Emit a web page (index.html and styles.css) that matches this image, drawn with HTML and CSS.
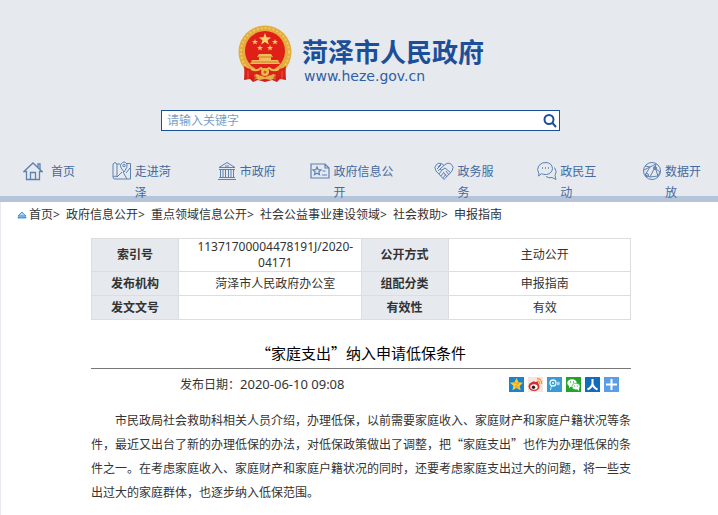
FILE: index.html
```html
<!DOCTYPE html>
<html lang="zh-CN">
<head>
<meta charset="utf-8">
<meta name="viewport" content="width=device-width, initial-scale=1">
<title>“家庭支出”纳入申请低保条件</title>
<link rel="stylesheet" href="styles.css">
</head>
<body>
<header class="header">
  <div class="brand">
    <svg class="emblem" viewBox="0 0 54 58" aria-hidden="true">
      <path d="M7 40 L6 55 L12 54 L15 57 L20 55 L27 57 L34 55 L39 57 L42 54 L48 55 L47 40Z" fill="#cf1e1c"/>
      <circle cx="27" cy="27" r="26.500" fill="#e3ac3d"/>
      <circle cx="27" cy="27" r="24" fill="none" stroke="#f0c660" stroke-width="2" stroke-dasharray="2 2"/>
      <circle cx="27" cy="26" r="20" fill="#e01f19"/>
      <path d="M27 8l1.600 4.200 4.400.2-3.400 2.800 1.200 4.300-3.800-2.400-3.800 2.400 1.200-4.300-3.400-2.800 4.400-.2z" fill="#f9d26b"/>
      <g fill="#f4c65b">
        <path id="s" d="M17 14l.8 2 2.200.1-1.700 1.300.6 2.100-1.900-1.200-1.900 1.200.6-2.100-1.700-1.300 2.200-.1z"/>
        <use href="#s" x="20"/><use href="#s" x="5" y="6"/><use href="#s" x="15" y="6"/>
      </g>
      <path d="M21 29h12l2 3h-2v3h7l2 4H12l2-4h7v-3h-2z" fill="#f2bd58"/>
      <path d="M20 32h14M13 37h28" stroke="#cf7c28" stroke-width="1"/>
      <path d="M6 41q9 6 14 1 3-2 7 0 4-2 7 0 5 5 14-1l-1 11q-8 1-11-3l-9 3-9-3q-3 4-11 3z" fill="#d9221b"/>
      <path d="M13 44q6 3 10-1l4 3 4-3q4 4 10 1" fill="none" stroke="#eebc50" stroke-width="2"/>
      <circle cx="27" cy="47" r="4" fill="#edb84c"/><circle cx="27" cy="47" r="1.500" fill="#cf5a20"/>
      <path d="M10 46v8M17 49v6M37 49v6M44 46v8" stroke="#e8583a" stroke-width="1"/>
      <path d="M17 53q5-3 10 0 5-3 10 0l-4 2-6-1-6 1z" fill="#e7b14a"/>
    </svg>
    <div class="brand-text">
      <div class="brand-name">菏泽市人民政府</div>
      <div class="brand-url">www.heze.gov.cn</div>
    </div>
  </div>
  <form class="search" role="search">
    <input class="search-input" type="text" placeholder="请输入关键字" aria-label="请输入关键字">
    <button class="search-button" type="button" aria-label="搜索">
      <svg viewBox="0 0 14 14"><circle cx="6" cy="5.500" r="4.500"/><path d="M9 8.500l4 4.500"/></svg>
    </button>
  </form>
  <nav class="nav">
    <a class="nav-item home" href="#"><svg viewBox="0 0 20 20"><path d="M1 10.500L10 2l9 8.500h-2.500V18.500h-13v-8zM15 6V3h2v5M7.500 18.500v-7h5v7" stroke-width="1.300"/></svg><span>首页</span></a>
    <a class="nav-item" href="#"><svg viewBox="0 0 20 20"><path d="M1 3q2-3 4 0v13q-2-2-4 0zM1 16q0 2 2 2h15.500V2.500H15M5 3h3M5 16l5-5M11 11l4 7M14 12l4-5M12 11Q7 5 9 3q3-4 6 0 1 3-3 8z"/><circle cx="12" cy="4.500" r="1.200"/></svg><span>走进菏泽</span></a>
    <a class="nav-item" href="#"><svg viewBox="0 0 20 20"><path d="M2 6.500L10 1.500l8 5zM2 8.500h16M3.500 9v7M6 9v7M8.500 9v7M11.500 9v7M14 9v7M16.500 9v7M2 16.500h16M1 18.500h18M8 5h4"/></svg><span>市政府</span></a>
    <a class="nav-item wide" href="#"><svg viewBox="0 0 20 20"><path d="M1 3h14l4 4v10H1zM15 3v4h4M7 6l1.200 2.700 2.800.3-2.100 1.900.6 2.800L7 12.300l-2.500 1.400.6-2.800L3 9l2.800-.3zM12.500 10h3M12 14h5" stroke-width="1.200"/></svg><span>政府信息公开</span></a>
    <a class="nav-item" href="#"><svg viewBox="0 0 20 20"><path d="M10 18.500L2 10Q-.5 6 2.500 3.500 6 .5 10 4.500q4-4 7.500-1 3 2.500.5 6.500zM10 4.500L6 8q1 2 3 .5l2-1.500 6 5M4 10l2-2M5 13l3-4M7 15l3-4M9 17l3-4M4 6l3-3M12 10l3 4M10 12l3 4M3 8l4-4"/></svg><span>政务服务</span></a>
    <a class="nav-item" href="#"><svg viewBox="0 0 20 20"><path d="M2 13Q-1 8 2 4.500 5 1 9 1.500q6 .5 6.500 6-.5 5-6 6-3 .3-5-.8L1.500 15zM17.500 6.500q3 4 .5 8l1 4-4-2q-3 1-6-1"/><path d="M5 7h1M8 7h1M11 7h1" stroke-width="1.500"/></svg><span>政民互动</span></a>
    <a class="nav-item" href="#"><svg viewBox="0 0 20 20"><circle cx="10" cy="10" r="8.500"/><path d="M3 5l5 1 6-3M8 6L3 14l5 2 8-1-3-9-5 10M14 3l-1 4 5 4-2 4M2 9l6-3"/><circle cx="13" cy="7" r="1.500"/><circle cx="5" cy="14" r="1.500"/></svg><span>数据开放</span></a>
  </nav>
</header>
<main class="page">
  <nav class="crumbs" aria-label="当前位置">
    <svg viewBox="0 0 10 8"><path d="M1 5l4-4 4 4zM1 6h8v1H1z" fill="#a9d5f6" stroke="#2a82cd" stroke-width=".8"/></svg>
    <a href="#">首页</a><a href="#">政府信息公开</a><a href="#">重点领域信息公开</a><a href="#">社会公益事业建设领域</a><a href="#">社会救助</a><a href="#">申报指南</a>
  </nav>
  <article class="article">
    <table class="info">
      <colgroup><col class="col-label"><col><col class="col-label"><col></colgroup>
      <tr><th scope="row">索引号</th><td>11371700004478191J/2020-<wbr>04171</td><th scope="row">公开方式</th><td>主动公开</td></tr>
      <tr><th scope="row">发布机构</th><td>菏泽市人民政府办公室</td><th scope="row">组配分类</th><td>申报指南</td></tr>
      <tr><th scope="row">发文文号</th><td></td><th scope="row">有效性</th><td>有效</td></tr>
    </table>
    <h1 class="title">“家庭支出”纳入申请低保条件</h1>
    <div class="meta">
      <div>发布日期：<time class="date" datetime="2020-06-10T09:08">2020-06-10 09:08</time></div>
      <div class="share">
        <a href="#" aria-label="QQ空间"><svg viewBox="0 0 15 15"><path fill="#1684d2" d="M0 0h15v15H0z"/><path d="M7.500 1l2 4.200 4.500.5-3.300 3 .9 4.600-4.100-2.200-4.100 2.200.9-4.600L1 5.700l4.500-.5z" fill="#fcc935"/><path d="M5 6h5l-4 4h5" fill="none" stroke="#e9a11c"/></svg></a>
        <a href="#" aria-label="新浪微博"><svg viewBox="0 0 15 15"><path fill="#f7e6df" d="M0 0h15v15H0z"/><ellipse cx="6" cy="9.500" rx="5.500" ry="4.500" fill="#dd2a2c"/><path d="M3 6l3-2 1 1 3-.5V8z" fill="#dd2a2c"/><ellipse cx="6" cy="10" rx="3.700" ry="2.800" fill="#fff"/><circle cx="5.500" cy="10.200" r="1.700" fill="#222"/><path d="M9 1.500q5 0 4.500 5.500M9 4q3 0 2.500 3" fill="none" stroke="#f29a34" stroke-width="1.300"/></svg></a>
        <a href="#" aria-label="腾讯微博"><svg viewBox="0 0 15 15"><path fill="#3a9bd2" d="M0 0h15v15H0z"/><path d="M3.500 13q0-3 2-5" fill="none" stroke="#d6eefa"/><circle cx="6" cy="6" r="3" fill="none" stroke="#e5f5fc" stroke-width="1.300"/><circle cx="6" cy="6" r="1" fill="#fff"/><path d="M10 5q2-1 3 1 0 3-3 2z" fill="#a5d7f0"/></svg></a>
        <a href="#" aria-label="微信"><svg viewBox="0 0 15 15"><path fill="#20a52c" d="M0 0h15v15H0z"/><ellipse cx="6" cy="6" rx="4.700" ry="3.800" fill="#fff"/><path d="M3 8v3l3-2z" fill="#fff"/><ellipse cx="10" cy="9.500" rx="4" ry="3.300" fill="#fff" stroke="#20a52c" stroke-width=".6"/><path d="M11 12l2 2v-3z" fill="#fff"/><g fill="#20a52c"><circle cx="4.500" cy="5" r=".7"/><circle cx="7.500" cy="5" r=".7"/><circle cx="8.700" cy="9" r=".6"/><circle cx="11.300" cy="9" r=".6"/></g></svg></a>
        <a href="#" aria-label="人人网"><svg viewBox="0 0 15 15"><path fill="#116cc0" d="M0 0h15v15H0z"/><path d="M7.500 2v4q0 4-5 6.500M7.500 6q0 4 5 6.500" fill="none" stroke="#fff" stroke-width="2"/></svg></a>
        <a href="#" aria-label="更多分享"><svg viewBox="0 0 15 15"><path fill="#5b9de8" d="M0 0h15v15H0z"/><path d="M7.500 2v11M2 7.500h11" stroke="#fff" stroke-width="2"/></svg></a>
      </div>
    </div>
    <p class="body-text">市民政局社会救助科相关人员介绍，办理低保，以前需要家庭收入、家庭财产和家庭户籍状况等条件，最近又出台了新的办理低保的办法，对低保政策做出了调整，把“家庭支出”也作为办理低保的条件之一。在考虑家庭收入、家庭财产和家庭户籍状况的同时，还要考虑家庭支出过大的问题，将一些支出过大的家庭群体，也逐步纳入低保范围。</p>
  </article>
</main>
</body>
</html>
```
FILE: styles.css
```css
* { box-sizing: border-box; }
body {
  margin: 0;
  background: #fff;
  color: #333;
  font: 12px/16px "Noto Sans", "Noto Sans CJK SC", sans-serif;
}
a { color: inherit; text-decoration: none; }
svg { display: block; flex: none; }

.header {
  background: #e6e9ee;
  border-bottom: 6px solid #b5c4d8;
  padding-top: 25px;
}
.brand {
  display: flex;
  justify-content: center;
  gap: 10px;
  padding-left: 4px;
}
.emblem { width: 54px; height: 58px; }
.brand-text { padding-top: 12px; color: #1c4f98; }
.brand-name {
  font: bold 26px/32px "Liberation Sans", "Noto Sans CJK SC", sans-serif;
}
.brand-url {
  padding-left: 2px;
  color: #2f5fa3;
  font: 14px/14px "DejaVu Sans", sans-serif;
}
.search {
  display: flex;
  align-items: center;
  height: 21px;
  margin: 27px 22% 0 auto;
  width: 399px;
  max-width: 78%;
  border: 1px solid #1c4f98;
  background: #fff;
}
.search-input {
  flex: 1;
  min-width: 0;
  height: 18px;
  padding: 0 5px;
  border: 0;
  outline: 0;
  background: none;
  color: #1c4f98;
  font: inherit;
}
.search-input::placeholder { color: #7c9fc6; opacity: 1; }
.search-button {
  padding: 0 2px;
  border: 0;
  background: none;
}
.search-button svg {
  width: 14px;
  height: 14px;
  fill: none;
  stroke: #1c4f98;
  stroke-width: 2;
}
.nav {
  display: grid;
  grid-template-columns: 89fr 105fr 93fr 125fr 103fr 105fr 76fr;
  height: 35px;
  margin-top: 30px;
  padding-left: 23px;
  color: #456a9f;
  line-height: 21px;
}
.nav-item {
  display: flex;
  align-items: flex-start;
  gap: 3px;
}
.home { gap: 8px; }
.nav-item svg {
  width: 20px;
  height: 20px;
  fill: none;
  stroke: #5d81b1;
  stroke-width: 1;
}
.nav-item span { width: 36px; }
.nav-item.wide { gap: 4px; }
.nav-item.wide span { width: 60px; }

.page { border-left: 1px solid #e6e9ee; padding-bottom: 11px; }
.crumbs {
  display: flex;
  align-items: center;
  height: 26px;
  padding-left: 16px;
}
.crumbs svg { width: 10px; height: 8px; margin-right: 2px; }
.crumbs a { display: flex; }
.crumbs a:not(:last-child)::after {
  content: ">";
  width: 13px;
}
.article { margin: 10px 87px 0 90px; }
.info {
  width: 100%;
  table-layout: fixed;
  border-collapse: collapse;
  text-align: center;
}
.col-label { width: 87px; }
.info th, .info td {
  height: 24px;
  padding: 0 0 0 11px;
  border: 1px solid #dcdde0;
  line-height: 16px;
}
.info th { padding: 0; background: #e6e9ee; }
.title {
  margin: 21px 0 0;
  padding-bottom: 3px;
  border-bottom: 1px solid #777;
  color: #000;
  font: 15px/24px "Noto Sans CJK SC", sans-serif;
  text-align: center;
}
.meta {
  display: flex;
  justify-content: space-between;
  align-items: center;
  height: 30px;
  padding: 0 12px 0 89px;
}
.date { font-size: 13px; }
.share { display: flex; gap: 4px; }
.share svg { width: 15px; height: 15px; }
.body-text {
  margin: 9px 0 0;
  font: 12px/24px "Noto Sans CJK SC", sans-serif;
  text-indent: 2em;
}
```
